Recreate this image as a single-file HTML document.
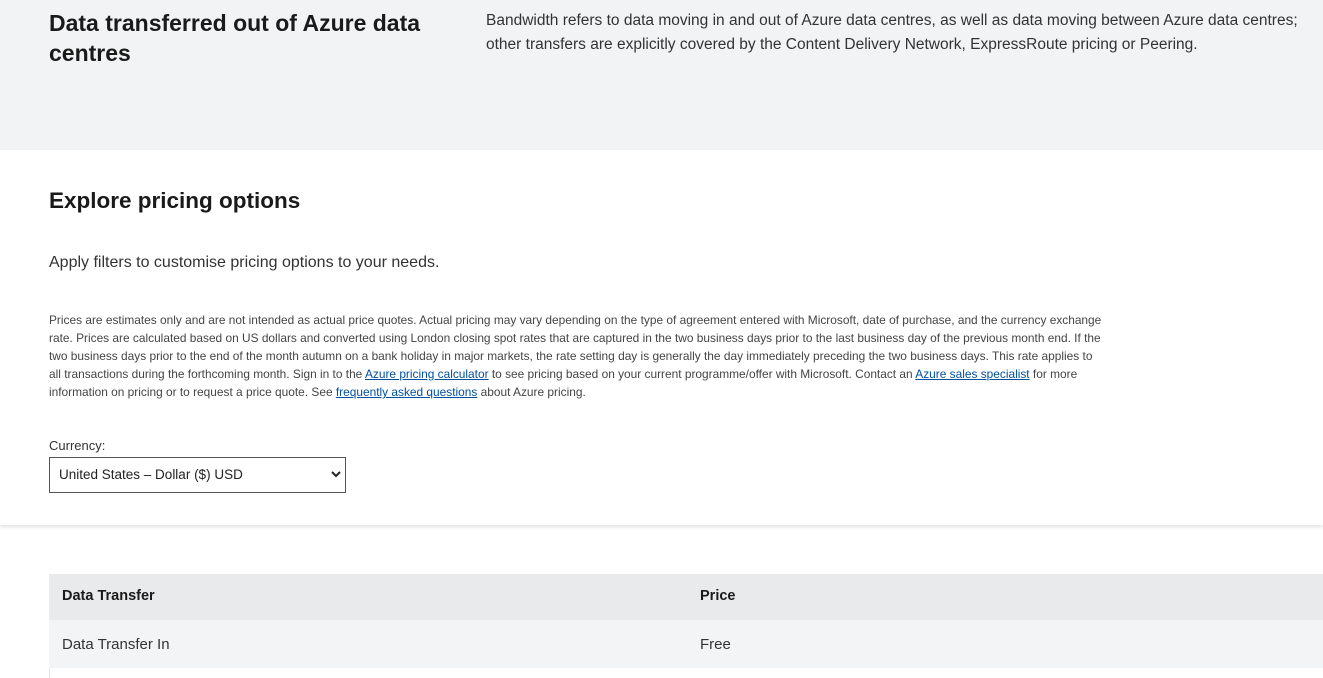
<!DOCTYPE html>
<html><head><style>
body{margin:0;width:1323px;height:678px;overflow:hidden;font-family:"Liberation Sans",sans-serif;color:#1a1a1a;background:#fff;position:relative}
.a{position:absolute;white-space:nowrap}
.top{position:absolute;left:0;top:0;width:1323px;height:150px;background:#f2f3f4}
.mid{position:absolute;left:0;top:150px;width:1323px;height:375px;background:#fff;box-shadow:0 2px 4px rgba(0,0,0,.12)}
.small{font-size:11.9px;line-height:18px;color:#444}
.small a{color:#0050a0;text-decoration:underline}
</style></head><body>
<div class="top"></div>
<div class="a" style="left:49px;top:8px;font-size:23px;line-height:30px;font-weight:bold;color:#1a1a1a">Data transferred out of Azure data<br>centres</div>
<div class="a" style="left:486px;top:9px;font-size:15.5px;line-height:24px;color:#333">Bandwidth refers to data moving in and out of Azure data centres, as well as data moving between Azure data centres;<br>other transfers are explicitly covered by the Content Delivery Network, ExpressRoute pricing or Peering.</div>
<div class="mid"></div>
<div class="a" style="left:49px;top:188px;font-size:22.5px;font-weight:bold">Explore pricing options</div>
<div class="a" style="left:49px;top:254px;font-size:16px;color:#333">Apply filters to customise pricing options to your needs.</div>
<div class="a small" style="left:49px;top:311px">Prices are estimates only and are not intended as actual price quotes. Actual pricing may vary depending on the type of agreement entered with Microsoft, date of purchase, and the currency exchange<br>rate. Prices are calculated based on US dollars and converted using London closing spot rates that are captured in the two business days prior to the last business day of the previous month end. If the<br>two business days prior to the end of the month autumn on a bank holiday in major markets, the rate setting day is generally the day immediately preceding the two business days. This rate applies to<br>all transactions during the forthcoming month. Sign in to the <a>Azure pricing calculator</a> to see pricing based on your current programme/offer with Microsoft. Contact an <a>Azure sales specialist</a> for more<br>information on pricing or to request a price quote. See <a>frequently asked questions</a> about Azure pricing.</div>
<div class="a" style="left:49px;top:438px;font-size:13px;color:#333">Currency:</div>
<div class="a" style="left:49px;top:457px;width:295px;height:34px;border:1px solid #555;background:#fff"></div>
<div class="a" style="left:59px;top:467px;font-size:13.5px;color:#222">United States – Dollar ($) USD</div>
<svg class="a" style="left:330px;top:470px" width="12" height="8" viewBox="0 0 12 8"><path d="M2 2l4 4 4-4" stroke="#222" stroke-width="2" fill="none"/></svg>
<div class="a" style="left:49px;top:574px;width:1274px;height:46px;background:#e9eaeb"></div>
<div class="a" style="left:49px;top:620px;width:1274px;height:48px;background:#f3f4f5"></div>
<div class="a" style="left:49px;top:668px;width:1px;height:10px;background:#e6e6e6"></div>
<div class="a" style="left:62px;top:588px;font-size:14.5px;font-weight:bold">Data Transfer</div>
<div class="a" style="left:700px;top:588px;font-size:14.5px;font-weight:bold">Price</div>
<div class="a" style="left:62px;top:636px;font-size:15px;color:#333">Data Transfer In</div>
<div class="a" style="left:700px;top:636px;font-size:15px;color:#333">Free</div>
</body></html>
